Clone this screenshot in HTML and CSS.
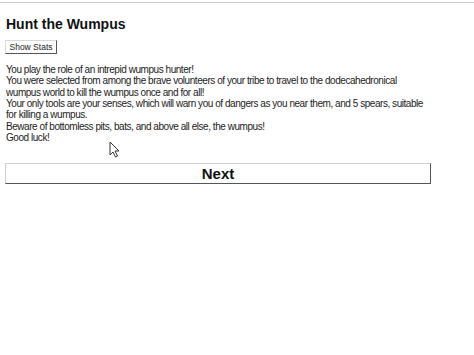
FILE: index.html
```html
<!DOCTYPE html>
<html>
<head>
<meta charset="utf-8">
<link rel="stylesheet" href="styles.css">
</head>
<body>
<div class="topline"></div>
<main class="page">
  <h1 class="title">Hunt the Wumpus</h1>
  <button class="stats">Show Stats</button>
  <div class="intro">
    You play the role of an intrepid wumpus hunter!<br>
    You were selected from among the brave volunteers of your tribe to travel to the dodecahedronical wumpus world to kill the wumpus once and for all!<br>
    Your only tools are your senses, which will warn you of dangers as you near them, and 5 spears, suitable for killing a wumpus.<br>
    Beware of bottomless pits, bats, and above all else, the wumpus!<br>
    Good luck!
  </div>
  <button class="next">Next</button>
</main>
<svg class="cursor" width="12" height="18" viewBox="0 0 12 18">
  <path d="M1 1 L1 14 L4 11 L6.5 16 L8.5 15 L6 10 L10 10 Z" fill="#fff" stroke="#333" stroke-width="1"/>
</svg>
</body>
</html>
```
FILE: styles.css
```css
html, body {
  margin: 0;
  padding: 0;
  background: #fff;
}
body {
  font-family: "Liberation Sans", Arial, sans-serif;
  color: #111;
  position: relative;
}
.topline {
  height: 1px;
  margin-top: 2px;
  background: #cfcfcf;
}
.page {
  padding: 0 5px;
  width: 426px;
}
.title {
  font-size: 14px;
  font-weight: bold;
  margin: 12px 0 0 1px;
  line-height: 18px;
}
.stats {
  display: block;
  margin: 7px 0 0 0;
  width: 52px;
  height: 14px;
  padding: 0;
  font-family: "Liberation Sans", Arial, sans-serif;
  font-size: 8.5px;
  color: #222;
  background: #fff;
  border: 1px solid;
  border-color: #d8d8d8 #555 #555 #d8d8d8;
  line-height: 11px;
}
.intro {
  margin-top: 10px;
  font-size: 10px;
  letter-spacing: -0.45px;
  line-height: 11.33px;
  color: #222;
  padding-left: 1px;
}
.next {
  display: block;
  margin-top: 20px;
  width: 426px;
  height: 21px;
  padding: 0;
  font-family: "Liberation Sans", Arial, sans-serif;
  font-size: 15px;
  font-weight: bold;
  color: #111;
  background: #fff;
  border: 1px solid;
  border-color: #cfcfcf #555 #555 #cfcfcf;
  line-height: 18px;
}
.cursor {
  position: absolute;
  left: 109px;
  top: 141px;
}
```
